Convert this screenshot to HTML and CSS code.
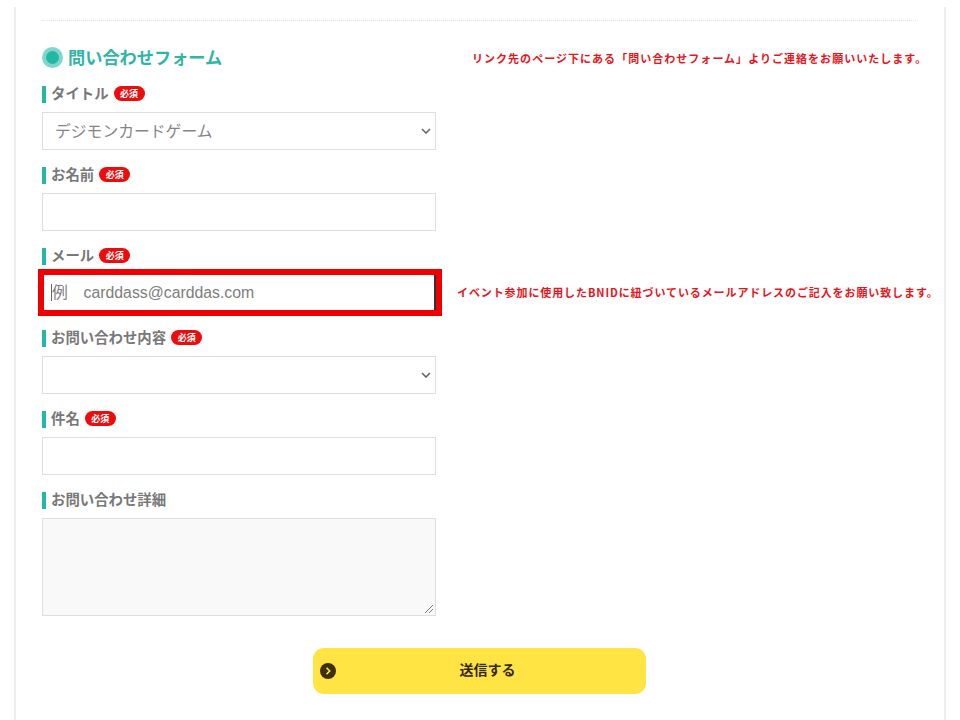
FILE: index.html
```
<!DOCTYPE html>
<html lang="ja">
<head>
<meta charset="utf-8">
<title>問い合わせフォーム</title>
<link rel="stylesheet" href="styles.css">
</head>
<body>
<main class="card">
  <hr class="divider">
  <div class="title-row">
    <h2 class="title"><span class="dot"></span>問い合わせフォーム</h2>
    <p class="note note-top">リンク先のページ下にある「問い合わせフォーム」よりご連絡をお願いいたします。</p>
  </div>
  <form class="form">
    <div class="field">
      <label class="label">タイトル<span class="req">必須</span></label>
      <div class="select-wrap">
        <div class="control select">デジモンカードゲーム</div>
        <svg class="chev" viewBox="0 0 10 6" width="10" height="6"><path d="M1 1l4 4 4-4" fill="none" stroke="#666" stroke-width="1.6"/></svg>
      </div>
    </div>
    <div class="field">
      <label class="label">お名前<span class="req">必須</span></label>
      <div class="control"></div>
    </div>
    <div class="field field-mail">
      <label class="label">メール<span class="req">必須</span></label>
      <div class="mail-row">
        <div class="control mail"><span class="caret"></span>例　carddass@carddas.com</div>
        <div class="highlight"></div>
        <p class="note note-mail">イベント参加に使用したBNIDに紐づいているメールアドレスのご記入をお願い致します。</p>
      </div>
    </div>
    <div class="field">
      <label class="label">お問い合わせ内容<span class="req">必須</span></label>
      <div class="select-wrap">
        <div class="control select"></div>
        <svg class="chev" viewBox="0 0 10 6" width="10" height="6"><path d="M1 1l4 4 4-4" fill="none" stroke="#666" stroke-width="1.6"/></svg>
      </div>
    </div>
    <div class="field">
      <label class="label">件名<span class="req">必須</span></label>
      <div class="control"></div>
    </div>
    <div class="field field-last">
      <label class="label">お問い合わせ詳細</label>
      <div class="control area">
        <svg class="grip" viewBox="0 0 10 10" width="10" height="10"><path d="M1 9L9 1M5 9L9 5" stroke="#777" stroke-width="1"/></svg>
      </div>
    </div>
    <div class="actions">
      <button type="button" class="submit">
        <span class="arrow"><svg viewBox="0 0 16 16" width="16" height="16"><circle cx="8" cy="8" r="8" fill="#3d2f08"/><path d="M6.5 4.8L9.7 8l-3.2 3.2" fill="none" stroke="#ffe43f" stroke-width="1.6"/></svg></span>
        送信する
      </button>
    </div>
  </form>
</main>
</body>
</html>
```
FILE: styles.css
```
* { box-sizing: border-box; }
html, body { margin: 0; padding: 0; background: #fff; }
body {
  width: 960px;
  height: 720px;
  overflow: hidden;
  padding-top: 7px;
  font-family: "Noto Sans CJK JP", "Liberation Sans", sans-serif;
  color: #757575;
}
.card {
  margin: 0 14px;
  width: 932px;
  height: 713px;
  padding: 13px 26px 0;
  border-left: 2px solid #eeeeee;
  border-right: 2px solid #eeeeee;
}
.divider {
  margin: 0;
  border: 0;
  border-top: 1px dotted #e4e4e4;
  width: 876px;
}
.title-row { display: flex; align-items: center; height: 24px; margin-top: 24px; position: relative; }
.title {
  margin: 0;
  display: flex;
  align-items: center;
  gap: 5px;
  font-size: 17.2px;
  font-weight: 700;
  line-height: 24px;
  color: #2fb5a4;
}
.dot {
  width: 21px;
  height: 21px;
  border-radius: 50%;
  background: #22b8a4;
  border: 4px solid #80d6ca;
}
.note {
  margin: 0;
  font-size: 11px;
  font-weight: 700;
  color: #e8141c;
  white-space: nowrap;
  position: absolute;
  line-height: 16px;
}
.note-top { left: 430px; top: 5px; letter-spacing: 1.03px; }
.note-mail { left: 415px; top: 10px; letter-spacing: 0.9px; }
.form { width: 876px; margin-top: 17px; display: flex; flex-direction: column; }
.field { width: 394px; height: 81.2px; }
.field-last { height: auto; }
.label {
  display: flex;
  align-items: center;
  height: 17px;
  margin: 0 0 9px;
  padding: 0 0 4px 5px;
  border-left: 4px solid #22b8a4;
  font-size: 14.4px;
  font-weight: 700;
  color: #787878;
  line-height: 17px;
}
.req {
  margin: 2px 0 0 5px;
  width: 31px;
  height: 15px;
  border-radius: 8px;
  background: #ee0b0b;
  color: #fff;
  font-size: 9px;
  line-height: 15px;
  text-align: center;
  font-weight: 700;
}
.control {
  width: 394px;
  height: 38px;
  border: 1px solid #dedede;
  background: #fff;
}
.select {
  padding-left: 12px;
  font-size: 15.8px;
  font-weight: 400;
  line-height: 35px;
  color: #858585;
}
.select-wrap, .mail-row { position: relative; }
.chev { position: absolute; right: 5px; top: 16px; }
.mail {
  padding-left: 8px;
  font-size: 15.8px;
  line-height: 36px;
  color: #7d7d7d;
  font-family: "Liberation Sans", "Noto Sans CJK JP", sans-serif;
  border-right: 2px solid #333;
}
.caret {
  display: inline-block;
  width: 1px;
  height: 17px;
  vertical-align: -3px;
  background: #666;
}
.highlight {
  position: absolute;
  left: -4px;
  top: -5px;
  width: 404px;
  height: 47px;
  border: 6px solid #f00000;
}
.area {
  height: 98px;
  background: #f9f9f9;
  position: relative;
}
.grip { position: absolute; right: 1px; bottom: 1px; }
.actions { display: flex; justify-content: center; margin-top: 32px; }
.submit {
  width: 333px;
  height: 46px;
  margin-right: 1px;
  padding: 0 0 3px 16px;
  border: 0;
  border-radius: 11px;
  background: #ffe443;
  font-family: inherit;
  font-size: 14px;
  font-weight: 700;
  color: #33290a;
  position: relative;
}
.arrow { position: absolute; left: 7px; top: 15px; height: 16px; }
```
